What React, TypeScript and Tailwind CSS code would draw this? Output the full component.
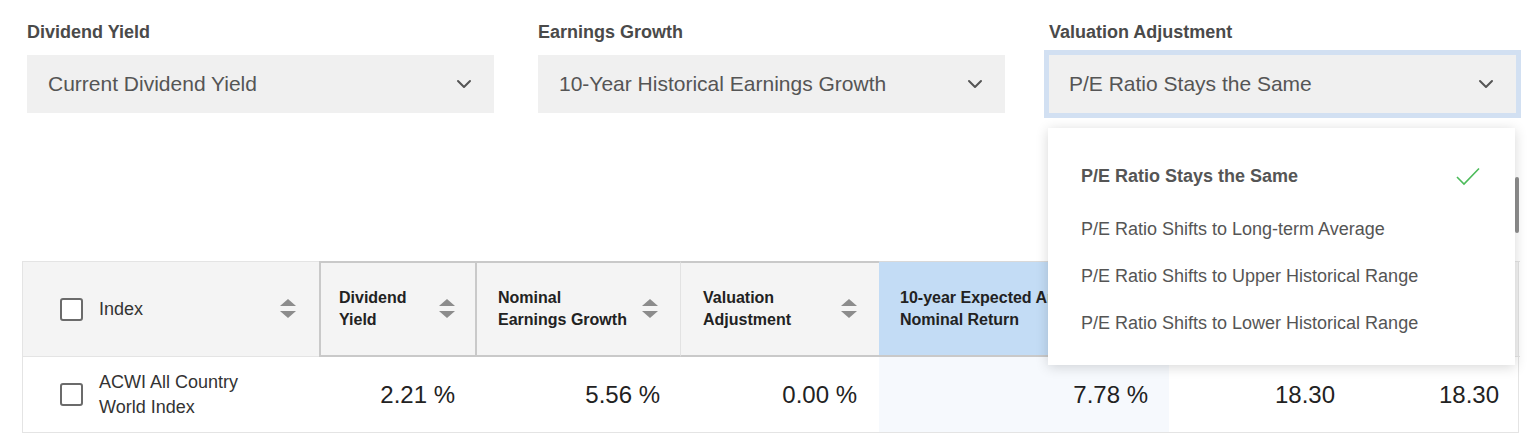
import React from 'react';

const ChevronDown: React.FC = () => (
  <svg width="16" height="10" viewBox="0 0 16 10" fill="none">
    <path d="M2 2l6 6 6-6" stroke="#555" strokeWidth="2" strokeLinecap="round" strokeLinejoin="round" />
  </svg>
);

const SortIcon: React.FC = () => (
  <svg width="16" height="20" viewBox="0 0 16 20" className="shrink-0">
    <path d="M8 0L16 7H0z" fill="#8c8c8c" />
    <path d="M0 12h16L8 19z" fill="#8c8c8c" />
  </svg>
);

const Checkbox: React.FC = () => (
  <span className="block w-[23px] h-[23px] shrink-0 rounded-[3px] border-2 border-[#6b6b6b] bg-white" />
);

interface FilterProps {
  label: string;
  value: string;
  active?: boolean;
}

const Filter: React.FC<FilterProps> = ({ label, value, active }) => (
  <div className="w-[467px] shrink-0">
    <div className="text-[18px] leading-[22px] font-bold text-[#4a4a4a] mb-[12px]">{label}</div>
    <div
      className={
        active
          ? 'h-[58px] bg-[#f0f0f0] flex items-center justify-between pl-[20px] pr-[22px] outline-[5px] outline-solid outline-[#d2e0f2]'
          : 'h-[58px] bg-[#f0f0f0] flex items-center justify-between pl-[21px] pr-[22px]'
      }
    >
      <span className="text-[21px] text-[#555]">{value}</span>
      <ChevronDown />
    </div>
  </div>
);

const options = [
  'P/E Ratio Shifts to Long-term Average',
  'P/E Ratio Shifts to Upper Historical Range',
  'P/E Ratio Shifts to Lower Historical Range',
];

export default function App() {
  return (
    <div
      className="relative w-[1536px] h-[438px] bg-white overflow-hidden"
      style={{ fontFamily: '"Liberation Sans", Arial, sans-serif' }}
    >
      <div className="flex gap-[44px] pl-[27px] pt-[21px]">
        <Filter label="Dividend Yield" value="Current Dividend Yield" />
        <Filter label="Earnings Growth" value="10-Year Historical Earnings Growth" />
        <Filter label="Valuation Adjustment" value="P/E Ratio Stays the Same" active />
      </div>

      <div className="ml-[22px] mt-[148px] w-[1497px] border-l border-r border-[#e4e4e4]">
        <div className="grid grid-cols-[296px_158px_204px_198px_290px_187px_164px] h-[96px] bg-[#f4f4f4] text-[16px] leading-[22px] font-bold text-[#222]">
          <div className="flex items-center pl-[37px] pr-[23px] border-t border-b border-[#e4e4e4]">
            <Checkbox />
            <span className="ml-[16px] flex-1 text-[18px] font-normal text-[#333]">Index</span>
            <SortIcon />
          </div>
          <div className="flex items-center pl-[18px] pr-[20px] border-2 border-[#c9c9c9]">
            <span className="flex-1">Dividend<br />Yield</span>
            <SortIcon />
          </div>
          <div className="flex items-center pl-[21px] pr-[22px] border-t-2 border-b-2 border-[#c9c9c9] border-r border-r-[#e2e2e2]">
            <span className="flex-1">Nominal<br />Earnings Growth</span>
            <SortIcon />
          </div>
          <div className="flex items-center pl-[22px] pr-[22px] border-t-2 border-b-2 border-[#c9c9c9]">
            <span className="flex-1">Valuation<br />Adjustment</span>
            <SortIcon />
          </div>
          <div className="flex items-center pl-[21px] pr-[20px] bg-[#c3dcf5] border-t border-b-2 border-t-[#d9d9d9] border-b-[#c9c9c9]">
            <span className="flex-1 whitespace-nowrap">10-year Expected Annualized<br />Nominal Return</span>
          </div>
          <div className="border-t border-b border-[#e4e4e4]" />
          <div className="border-t border-b border-[#e4e4e4]" />
        </div>

        <div className="grid grid-cols-[296px_158px_204px_198px_290px_187px_164px] h-[76px] border-b border-[#e4e4e4] text-[24px] text-[#222]">
          <div className="flex items-center pl-[37px]">
            <Checkbox />
            <span className="ml-[16px] text-[18px] leading-[25px] text-[#333]">
              ACWI All Country
              <br />
              World Index
            </span>
          </div>
          <div className="flex items-center justify-end pr-[22px]">2.21 %</div>
          <div className="flex items-center justify-end pr-[21px]">5.56 %</div>
          <div className="flex items-center justify-end pr-[22px]">0.00 %</div>
          <div className="flex items-center justify-end pr-[21px] bg-[#f6f9fd]">7.78 %</div>
          <div className="flex items-center justify-end pr-[21px]">18.30</div>
          <div className="flex items-center justify-end pr-[21px]">18.30</div>
        </div>
      </div>

      <div className="absolute left-[1515px] top-[177px] w-[4px] h-[56px] rounded-full bg-[#8f8f8f]" />

      <div className="absolute left-[1048px] top-[128px] w-[467px] bg-white shadow-[0_2px_12px_rgba(0,0,0,0.16)] pt-[25px] pb-[18px] pl-[33px] pr-[35px] text-[18px] text-[#555]">
        <div className="h-[47px] mb-[6px] flex items-center justify-between font-bold">
          <span>P/E Ratio Stays the Same</span>
          <svg width="24" height="19" viewBox="0 0 24 19" fill="none">
            <path d="M1 10l7 7L23 1.5" stroke="#4cbb5a" strokeWidth="1.6" />
          </svg>
        </div>
        {options.map((o) => (
          <div key={o} className="h-[47px] flex items-center">
            {o}
          </div>
        ))}
      </div>
    </div>
  );
}
